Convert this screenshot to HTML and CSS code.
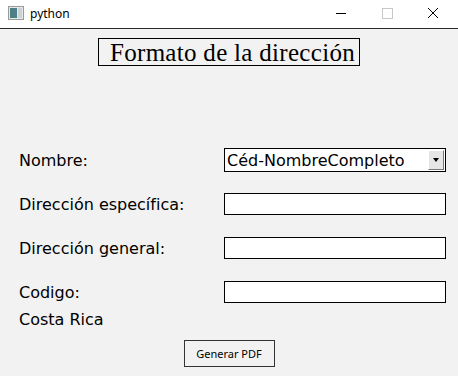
FILE: index.html
```html
<!DOCTYPE html>
<html lang="es">
<head>
    <meta charset="UTF-8">
    <meta name="viewport" content="width=device-width, initial-scale=1.0">
    <title>python</title>
    <link rel="stylesheet" href="styles.css">
</head>
<body>
    <div class="titlebar">
        <svg class="app-icon" width="16" height="14" viewBox="0 0 16 14">
            <rect x="0.5" y="0.5" width="15" height="13" fill="#e8e8e8" stroke="#9a9a9a"/>
            <rect x="2" y="2" width="7" height="10" fill="#4f7f86"/>
            <rect x="10" y="2" width="4" height="10" fill="#c9d3d6"/>
        </svg>
        <span class="app-name">python</span>
        <div class="controls">
            <svg width="46" height="28" viewBox="0 0 46 28"><line x1="18" y1="13.5" x2="28" y2="13.5" stroke="#000" stroke-width="1"/></svg>
            <svg width="46" height="28" viewBox="0 0 46 28"><rect x="18.5" y="8.5" width="10" height="10" fill="none" stroke="#c8c8c8"/></svg>
            <svg width="46" height="28" viewBox="0 0 46 28"><path d="M18 8 L28 18 M28 8 L18 18" stroke="#000" stroke-width="1"/></svg>
        </div>
    </div>

    <div class="window">
        <div class="heading"><span>Formato de la dirección</span></div>

        <form class="fields">
            <label>Nombre:</label>
            <div class="select">
                <span>Céd-NombreCompleto</span>
                <span class="arrow"></span>
            </div>

            <label>Dirección específica:</label>
            <input type="text">

            <label>Dirección general:</label>
            <input type="text">

            <label>Codigo:</label>
            <input type="text">
        </form>

        <div class="country">Costa Rica</div>

        <div class="actions">
            <button type="button">Generar PDF</button>
        </div>
    </div>
</body>
</html>
```

FILE: styles.css
```css
body {
    margin: 0;
    background-color: #f2f2f2;
    font-family: "DejaVu Sans", Verdana, sans-serif;
    color: #000;
}
.titlebar {
    height: 28px;
    background-color: #fff;
    border-bottom: 1px solid #2b2b2b;
    display: flex;
    align-items: center;
    padding-left: 8px;
}
.app-icon {
    margin-top: -2px;
}
.app-name {
    margin-left: 6px;
    font-family: "Noto Sans", "Open Sans", sans-serif;
    font-size: 12px;
    margin-top: -2px;
}
.controls {
    margin-left: auto;
    display: flex;
    margin-right: 2px;
}
.controls svg {
    display: block;
}
.window {
    padding-top: 9px;
}
.heading {
    display: flex;
    justify-content: center;
}
.heading span {
    display: block;
    width: 249px;
    height: 26px;
    line-height: 27px;
    border: 1px solid #000;
    font-family: "Liberation Serif", "DejaVu Serif", serif;
    font-size: 25px;
    letter-spacing: 0.3px;
    text-align: left;
    padding-left: 11px;
    white-space: nowrap;
    overflow: hidden;
    box-sizing: content-box;
}
.fields {
    margin-top: 82px;
    padding-left: 19px;
    display: grid;
    grid-template-columns: 205px 222px;
    grid-template-rows: 24px 23px 23px 22px;
    row-gap: 21px;
    align-items: center;
}
.fields label {
    font-size: 16px;
}
.fields input {
    box-sizing: border-box;
    width: 222px;
    height: 22px;
    margin: 0;
    border: 1px solid #000;
    background-color: #fff;
    align-self: start;
}
.select {
    box-sizing: border-box;
    height: 24px;
    border: 1px solid #000;
    background-color: #fff;
    display: flex;
    align-items: center;
    font-size: 16px;
    padding-left: 2px;
}
.arrow {
    margin-left: auto;
    margin-right: 1px;
    width: 16px;
    height: 20px;
    box-sizing: border-box;
    background-color: #e6e6e6;
    border-top: 1px solid #fff;
    border-left: 1px solid #fff;
    border-right: 1px solid #777;
    border-bottom: 1px solid #777;
    display: flex;
    align-items: center;
    justify-content: center;
}
.arrow::after {
    content: "";
    border-left: 3px solid transparent;
    border-right: 3px solid transparent;
    border-top: 4px solid #000;
}
.country {
    padding-left: 19px;
    margin-top: 7px;
    font-size: 16px;
}
.actions {
    text-align: center;
    margin-top: 11px;
}
.actions button {
    width: 91px;
    height: 27px;
    border: 1px solid #333;
    background-color: #f2f2f2;
    font-family: "Noto Sans", "Open Sans", sans-serif;
    font-size: 11px;
    padding: 0;
}
```
